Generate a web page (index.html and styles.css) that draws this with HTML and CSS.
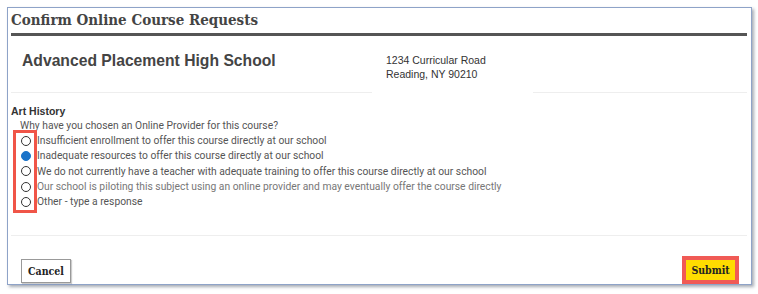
FILE: index.html
```html
<!DOCTYPE html>
<html>
<head>
<meta charset="utf-8">
<link rel="stylesheet" href="styles.css">
</head>
<body>
<div class="frame">
  <h1 class="title">Confirm Online Course Requests</h1>
  <div class="school-row">
    <div class="col col-name"><h2 class="school">Advanced Placement High School</h2></div>
    <div class="col col-addr">
      <div>1234 Curricular Road</div>
      <div>Reading, NY 90210</div>
    </div>
    <div class="col col-rest"></div>
  </div>
  <div class="course">
    <div class="course-name">Art History</div>
    <div class="question">Why have you chosen an Online Provider for this course?</div>
    <div class="options">
      <div class="highlight"></div>
      <label class="opt"><span class="radio"></span><span>Insufficient enrollment to offer this course directly at our school</span></label>
      <label class="opt"><span class="radio checked"></span><span>Inadequate resources to offer this course directly at our school</span></label>
      <label class="opt"><span class="radio"></span><span>We do not currently have a teacher with adequate training to offer this course directly at our school</span></label>
      <label class="opt alt"><span class="radio"></span><span>Our school is piloting this subject using an online provider and may eventually offer the course directly</span></label>
      <label class="opt"><span class="radio"></span><span>Other - type a response</span></label>
    </div>
  </div>
  <div class="footer">
    <button class="btn cancel">Cancel</button>
    <span class="submit-wrap"><button class="btn submit">Submit</button></span>
  </div>
</div>
</body>
</html>
```

FILE: styles.css
```css
html, body { margin: 0; padding: 0; background: #fff; }
body { width: 758px; height: 294px; overflow: hidden; }
.frame {
  box-sizing: border-box;
  margin: 7px 0 0 7px;
  width: 745px;
  height: 278px;
  border: 1px solid #8ea3c8;
  box-shadow: 2px 2px 3px rgba(60,70,90,0.45);
  padding: 0 4px 0 3px;
  font-family: Roboto, "Liberation Sans", sans-serif;
  color: #555;
}
.title {
  margin: 0;
  padding: 2px 0 3px 0;
  font-family: "DejaVu Serif Condensed", "DejaVu Serif", serif;
  font-weight: bold;
  font-size: 15px;
  line-height: 20px;
  color: #444;
  border-bottom: 3px solid #555;
}
.school-row { display: flex; height: 57px; }
.col { box-sizing: border-box; }
.col-name { width: 361px; border-bottom: 1px solid #eee; padding: 16px 0 0 11px; }
.col-addr { width: 161px; padding: 17px 0 0 14px; font-family: "Liberation Sans", Arial, sans-serif; font-size: 10.5px; line-height: 14px; color: #333; }
.col-rest { flex: 1; border-bottom: 1px solid #eee; }
.school {
  margin: 0;
  font-family: "Liberation Sans", Arial, sans-serif;
  font-size: 15.7px;
  font-weight: bold;
  color: #444;
  line-height: 18px;
}
.course { padding: 11px 0 0 0; height: 143px; box-sizing: border-box; border-bottom: 1px solid #eee; }
.course-name { font-family: "Liberation Sans", Arial, sans-serif; font-weight: bold; font-size: 10.5px; color: #333; line-height: 14px; }
.question { padding-left: 9px; font-size: 10.3px; line-height: 15px; color: #555; }
.options { position: relative; padding-left: 10px; }
.highlight {
  position: absolute;
  left: 2px; top: -3px;
  width: 24px; height: 83px;
  box-sizing: border-box;
  border: 3px solid #f05548;
}
.opt { display: flex; align-items: center; height: 15.3px; font-size: 10.3px; color: #555; }
.opt.alt { color: #777; }
.radio {
  box-sizing: border-box;
  width: 10px; height: 10px;
  border: 1.5px solid #333;
  border-radius: 50%;
  margin-right: 6px;
  flex: none;
}
.radio.checked { background: #1a73c9; border-color: #1a73c9; }
.footer { display: flex; justify-content: space-between; align-items: flex-end; padding: 0 8px 0 10px; height: 48px; }
.btn {
  font-family: "DejaVu Serif Condensed", "DejaVu Serif", serif;
  font-weight: bold;
  font-size: 10.5px;
  color: #222;
  background: #fff;
  border: 1px solid #999;
  box-shadow: 1px 1px 1px rgba(0,0,0,0.2);
  padding: 0;
  width: 50px;
  height: 24px;
}
.cancel { margin-bottom: 1px; }
.submit-wrap { border: 4px solid #f05a55; display: flex; }
.submit { background: #ffdc00; border: none; box-shadow: none; width: 49px; height: 20px; }
```
